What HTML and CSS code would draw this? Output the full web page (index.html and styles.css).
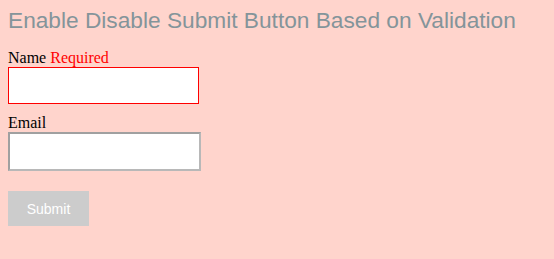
FILE: index.html
```html
<!DOCTYPE html>
<html>
<head>
<meta charset="utf-8">
<link rel="stylesheet" href="styles.css">
</head>
<body>
<div class="page">
  <h1 class="title">Enable Disable Submit Button Based on Validation</h1>
  <form class="form">
    <div class="field">
      <label class="label" for="name">Name <span class="error">Required</span></label>
      <input class="input input-invalid" id="name" type="text">
    </div>
    <div class="field">
      <label class="label" for="email">Email</label>
      <input class="input input-plain" id="email" type="text">
    </div>
    <button class="submit" type="button" disabled>Submit</button>
  </form>
</div>
</body>
</html>
```
FILE: styles.css
```css
html, body {
  margin: 0;
  padding: 0;
}
body {
  background: #ffd4cc;
  font-family: "Liberation Serif", "Times New Roman", serif;
  font-size: 16px;
  color: #000;
}
.page {
  padding: 7px 8px 0 8px;
}
.title {
  margin: 0 0 16px 0;
  font-family: "Liberation Sans", Arial, sans-serif;
  font-size: 22.7px;
  font-weight: normal;
  color: #84949a;
  line-height: 26px;
  white-space: nowrap;
}
.form {
  display: flex;
  flex-direction: column;
  align-items: flex-start;
}
.field {
  display: flex;
  flex-direction: column;
  align-items: flex-start;
  margin-bottom: 10px;
}
.label {
  display: block;
  line-height: 18px;
}
.error {
  color: #ff0000;
}
.input {
  box-sizing: border-box;
  margin: 0;
  padding: 0 4px;
  background: #fff;
  outline: none;
  font-size: 16px;
}
.input-invalid {
  width: 191px;
  height: 37px;
  border: 1px solid #ff0000;
}
.input-plain {
  width: 193px;
  height: 39px;
  border: 2px solid #a9a9a9;
  border-color: #a0a0a0 #b8b8b8 #b8b8b8 #a0a0a0;
}
.submit {
  margin-top: 10px;
  width: 81px;
  height: 35px;
  border: none;
  background: #cccccc;
  color: #ffffff;
  font-family: "Liberation Sans", Arial, sans-serif;
  font-size: 14px;
  padding: 0;
}
```
